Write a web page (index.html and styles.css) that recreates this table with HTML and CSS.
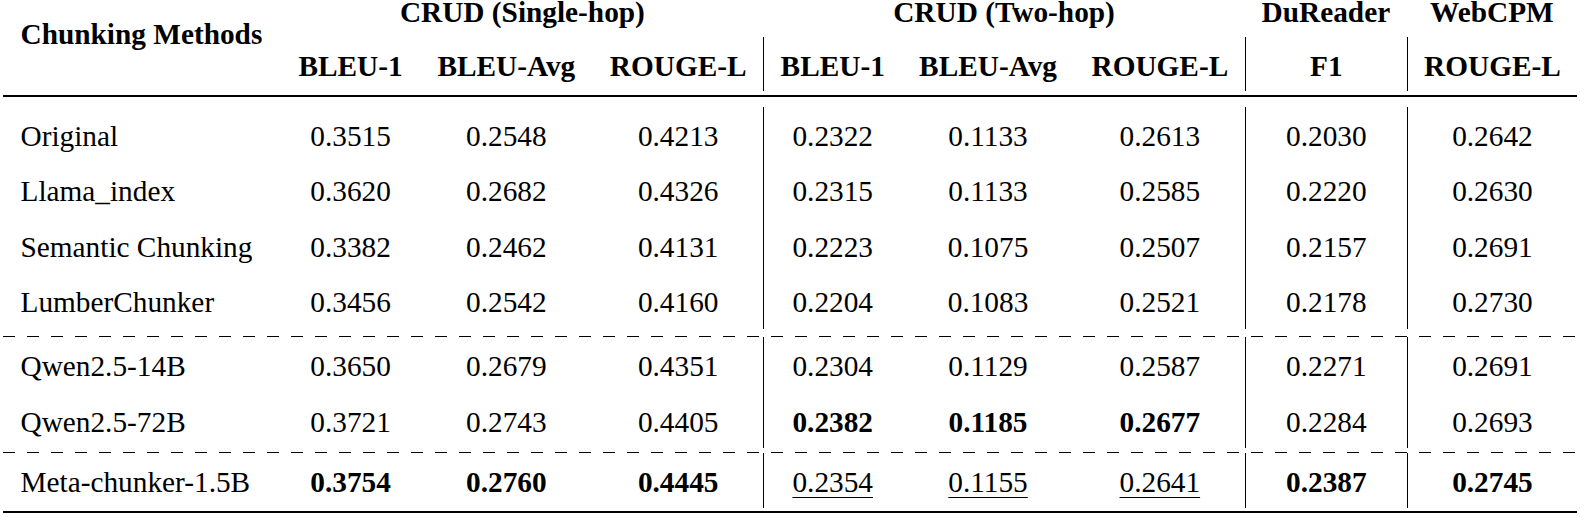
FILE: index.html
```html
<!DOCTYPE html>
<html lang="en">
<head>
<meta charset="utf-8">
<title>Chunking Methods Results</title>
<link rel="stylesheet" href="styles.css">
</head>
<body>
<table class="results">
  <colgroup>
    <col class="w-method">
    <col class="w-b1">
    <col class="w-bavg">
    <col class="w-rl">
    <col class="w-b1">
    <col class="w-bavg">
    <col class="w-rl">
    <col class="w-f1">
    <col class="w-rl">
  </colgroup>
  <thead>
    <tr class="hrow1">
      <th rowspan="2" class="method-head">Chunking Methods</th>
      <th colspan="3">CRUD (Single-hop)</th>
      <th colspan="3">CRUD (Two-hop)</th>
      <th>DuReader</th>
      <th>WebCPM</th>
    </tr>
    <tr class="hrow2">
      <th>BLEU-1</th>
      <th>BLEU-Avg</th>
      <th>ROUGE-L</th>
      <th class="vl">BLEU-1</th>
      <th>BLEU-Avg</th>
      <th>ROUGE-L</th>
      <th class="vl">F1</th>
      <th class="vl">ROUGE-L</th>
    </tr>
    <tr class="gap-mid"><td colspan="9"><div class="midrule"></div></td></tr>
  </thead>
  <tbody>
    <tr class="row">
      <td class="method">Original</td>
      <td>0.3515</td><td>0.2548</td><td>0.4213</td>
      <td class="vl">0.2322</td><td>0.1133</td><td>0.2613</td>
      <td class="vl">0.2030</td><td class="vl">0.2642</td>
    </tr>
    <tr class="row">
      <td class="method">Llama_index</td>
      <td>0.3620</td><td>0.2682</td><td>0.4326</td>
      <td class="vl">0.2315</td><td>0.1133</td><td>0.2585</td>
      <td class="vl">0.2220</td><td class="vl">0.2630</td>
    </tr>
    <tr class="row">
      <td class="method">Semantic Chunking</td>
      <td>0.3382</td><td>0.2462</td><td>0.4131</td>
      <td class="vl">0.2223</td><td>0.1075</td><td>0.2507</td>
      <td class="vl">0.2157</td><td class="vl">0.2691</td>
    </tr>
    <tr class="row">
      <td class="method">LumberChunker</td>
      <td>0.3456</td><td>0.2542</td><td>0.4160</td>
      <td class="vl">0.2204</td><td>0.1083</td><td>0.2521</td>
      <td class="vl">0.2178</td><td class="vl">0.2730</td>
    </tr>
    <tr class="gap-dash first"><td colspan="9"><div class="dashrule"></div></td></tr>
    <tr class="row">
      <td class="method">Qwen2.5-14B</td>
      <td>0.3650</td><td>0.2679</td><td>0.4351</td>
      <td class="vl">0.2304</td><td>0.1129</td><td>0.2587</td>
      <td class="vl">0.2271</td><td class="vl">0.2691</td>
    </tr>
    <tr class="row">
      <td class="method">Qwen2.5-72B</td>
      <td>0.3721</td><td>0.2743</td><td>0.4405</td>
      <td class="vl best">0.2382</td><td class="best">0.1185</td><td class="best">0.2677</td>
      <td class="vl">0.2284</td><td class="vl">0.2693</td>
    </tr>
    <tr class="gap-dash second-gap"><td colspan="9"><div class="dashrule"></div></td></tr>
    <tr class="row">
      <td class="method">Meta-chunker-1.5B</td>
      <td class="best">0.3754</td><td class="best">0.2760</td><td class="best">0.4445</td>
      <td class="vl"><span class="second">0.2354</span></td><td><span class="second">0.1155</span></td><td><span class="second">0.2641</span></td>
      <td class="vl best">0.2387</td><td class="vl best">0.2745</td>
    </tr>
    <tr class="gap-bottom"><td colspan="9"><div class="bottomrule"></div></td></tr>
  </tbody>
</table>
</body>
</html>
```

FILE: styles.css
```css
html, body {
  margin: 0;
  padding: 0;
  background: #ffffff;
}

body {
  font-family: "Liberation Serif", "Times New Roman", serif;
  font-size: 29.3px;
  color: #000000;
}

.results {
  margin-left: 3px;
  width: 1574px;
  table-layout: fixed;
  border-collapse: separate;
  border-spacing: 0;
}

.w-method { width: 278.5px; }
.w-b1 { width: 138px; }
.w-bavg { width: 173.6px; }
.w-rl { width: 170px; }
.w-f1 { width: 162px; }

.results th,
.results td {
  padding: 0;
  text-align: center;
  white-space: nowrap;
}

.results th {
  font-weight: bold;
}

.hrow1 th {
  height: 25.2px;
  line-height: 25.2px;
  padding-bottom: 11.5px;
  vertical-align: top;
}

.hrow1 th.method-head {
  text-align: left;
  padding: 18.1px 0 0 17.5px;
  line-height: 32px;
  height: auto;
  vertical-align: top;
}

.hrow2 th {
  height: 49.4px;
  line-height: 49.4px;
  padding-top: 4.9px;
  vertical-align: top;
}

.row td {
  height: 52.5px;
  line-height: 52.5px;
  padding-top: 3px;
  vertical-align: top;
}

.row td.method {
  text-align: left;
  padding-left: 17.5px;
}

.vl {
  border-left: 1px solid #000000;
}

.best {
  font-weight: bold;
}

.second {
  text-decoration: underline;
  text-decoration-thickness: 1px;
  text-underline-offset: 5px;
}

.gap-mid td {
  height: 15.7px;
  line-height: 0;
  font-size: 0;
  vertical-align: top;
}

.midrule {
  margin-top: 4px;
  height: 1.6px;
  background: #000000;
}

.gap-dash td {
  line-height: 0;
  font-size: 0;
  vertical-align: bottom;
}

.gap-dash.first td {
  height: 8.5px;
}

.gap-dash.second-gap td {
  height: 4.5px;
}

.dashrule {
  height: 1px;
  background-image: linear-gradient(to right, #000000 0 12px, transparent 12px 24px);
  background-size: 24px 1px;
  background-repeat: repeat-x;
}

.gap-bottom td {
  height: 5.3px;
  line-height: 0;
  font-size: 0;
  vertical-align: bottom;
}

.bottomrule {
  height: 2.6px;
  background: #000000;
}
```
